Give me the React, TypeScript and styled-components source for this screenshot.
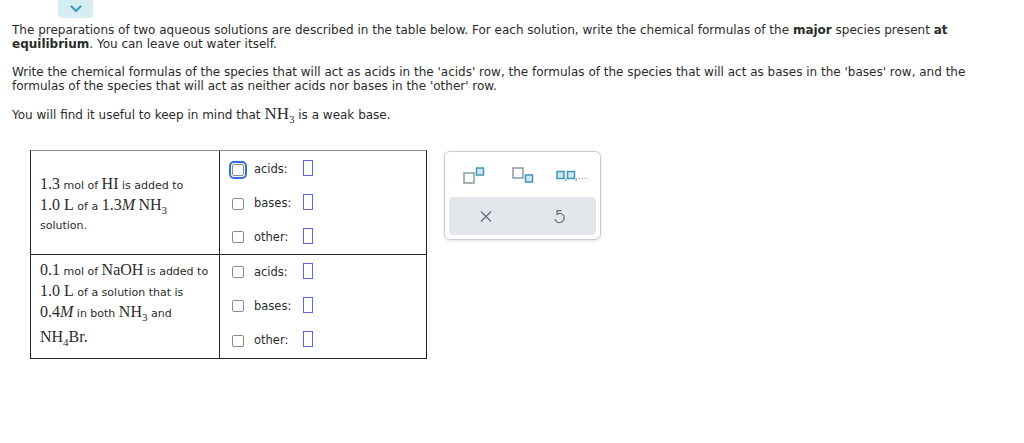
import React from "react";
import styled, { createGlobalStyle } from "styled-components";

const Global = createGlobalStyle`
  html, body { margin: 0; padding: 0; background: #fff; }
  body { font-family: "DejaVu Sans", Verdana, sans-serif; color: #2b2b2b; }
`;

const Page = styled.div`
  padding: 0 12px;
  width: 1010px;
  box-sizing: border-box;
`;

const Tab = styled.div`
  width: 35px;
  height: 18px;
  margin-left: 46px;
  background: #d7edf4;
  border-radius: 0 0 4px 4px;
  display: flex;
  align-items: center;
  justify-content: center;
`;

const Para = styled.p<{ $extra?: number }>`
  margin: 5px 0 13px;
  font-size: 12px;
  line-height: 14px;
  white-space: nowrap;
  & + & { margin-top: ${(p) => 13 + (p.$extra ?? 0)}px; }
`;

const Math = styled.span<{ $italic?: boolean; $size?: number }>`
  font-family: "Liberation Serif", "Times New Roman", serif;
  font-size: ${(p) => p.$size ?? 16}px;
  font-style: ${(p) => (p.$italic ? "italic" : "normal")};
`;

const Sub = styled.sub`
  font-size: 11px;
  vertical-align: -4px;
  line-height: 0;
`;

const Work = styled.div`
  display: flex;
  align-items: flex-start;
  gap: 17px;
  margin: 28px 0 0 18px;
`;

const Grid = styled.div`
  display: grid;
  grid-template-columns: 189px 206px;
  grid-template-rows: 104px 103px;
  border: 1px solid #222;
  border-top-color: #8c8c8c;
`;

const Desc = styled.div<{ $last?: boolean; $pad: number }>`
  border-right: 1px solid #222;
  border-bottom: ${(p) => (p.$last ? "none" : "1px solid #222")};
  padding: ${(p) => p.$pad}px 4px 0 9px;
  display: flex;
  flex-direction: column;
  font-size: 11px;
`;

const DescLine = styled.div<{ $h?: number }>`
  height: ${(p) => p.$h ?? 21}px;
  line-height: ${(p) => p.$h ?? 21}px;
  white-space: nowrap;
`;

const Answers = styled.div<{ $last?: boolean }>`
  border-bottom: ${(p) => (p.$last ? "none" : "1px solid #222")};
  padding-top: ${(p) => (p.$last ? 0 : 2)}px;
  display: flex;
  flex-direction: column;
`;

const AnswerRow = styled.div`
  flex: 1;
  display: flex;
  align-items: center;
  font-size: 11.5px;
`;

const CheckSlot = styled.div`
  width: 34px;
  display: flex;
  justify-content: center;
  padding-left: 1px;
  box-sizing: border-box;
`;

const Check = styled.span<{ $focus?: boolean }>`
  box-sizing: border-box;
  display: inline-block;
  width: 12px;
  height: 12px;
  border: 1px solid #8a8a8a;
  border-radius: 2px;
  background: #fff;
  ${(p) =>
    p.$focus
      ? `outline: 2px solid #2f6fd8; outline-offset: 1px; border-radius: 2px;`
      : ""}
`;

const Label = styled.span`
  width: 49px;
  margin-bottom: 1px;
`;

const Slot = styled.span`
  box-sizing: border-box;
  display: inline-block;
  width: 10px;
  height: 16px;
  border: 1.5px solid #5b66ee;
  margin-bottom: 3px;
`;

const Panel = styled.div`
  margin-top: 1px;
  width: 157px;
  height: 89px;
  box-sizing: border-box;
  border: 1px solid #c9cdd1;
  border-radius: 6px;
  box-shadow: 0 1px 3px rgba(0, 0, 0, 0.12);
  padding: 0 4px 4px;
  display: flex;
  flex-direction: column;
`;

const IconRow = styled.div`
  flex: 1;
  display: grid;
  grid-template-columns: repeat(3, 1fr);
  align-items: center;
  justify-items: center;
  padding-top: 2px;
`;

const Bar = styled.div`
  height: 38px;
  background: #e3e7eb;
  border-radius: 4px;
  display: grid;
  grid-template-columns: 1fr 1fr;
  align-items: center;
  justify-items: center;
`;

const Chevron = () => (
  <svg width="12" height="8" viewBox="0 0 12 8">
    <path d="M1.5 1.5 L6 6 L10.5 1.5" fill="none" stroke="#3d9cc4" strokeWidth="2.2" strokeLinecap="round" strokeLinejoin="round" />
  </svg>
);

const SupIcon = () => (
  <svg width="22" height="18" viewBox="0 0 22 18">
    <rect x="1" y="6" width="10" height="10" fill="#fff" stroke="#8b9a9f" strokeWidth="1.5" />
    <rect x="13.5" y="1" width="7" height="7" fill="#cfe8ef" stroke="#3f98b4" strokeWidth="1.5" />
  </svg>
);

const SubIcon = () => (
  <svg width="22" height="17" viewBox="0 0 22 17">
    <rect x="1" y="1" width="10" height="10" fill="#fff" stroke="#8b9a9f" strokeWidth="1.5" />
    <rect x="13.5" y="8" width="7" height="7" fill="#cfe8ef" stroke="#3f98b4" strokeWidth="1.5" />
  </svg>
);

const ListIcon = () => (
  <svg width="32" height="12" viewBox="0 0 32 12">
    <rect x="1" y="1.5" width="7" height="7" fill="#cfe8ef" stroke="#3f98b4" strokeWidth="1.5" />
    <path d="M10 8.5 L9.5 11" stroke="#3f98b4" strokeWidth="1" />
    <rect x="11.5" y="1.5" width="7" height="7" fill="#cfe8ef" stroke="#3f98b4" strokeWidth="1.5" />
    <path d="M20.5 8.5 L20 11" stroke="#3f98b4" strokeWidth="1" />
    <circle cx="23.5" cy="8.5" r="0.6" fill="#6c7c82" />
    <circle cx="26.5" cy="8.5" r="0.6" fill="#6c7c82" />
    <circle cx="29.5" cy="8.5" r="0.6" fill="#6c7c82" />
  </svg>
);

const XIcon = () => (
  <svg width="12" height="11" viewBox="0 0 12 11">
    <path d="M1 0.5 L11 10.5 M11 0.5 L1 10.5" stroke="#5f6f77" strokeWidth="1.2" />
  </svg>
);

const UndoIcon = () => (
  <svg width="13" height="15" viewBox="0 0 13 15">
    <path d="M4 5.2 A4.6 4.6 0 1 1 2.2 10.4" fill="none" stroke="#5f6f77" strokeWidth="1.2" strokeLinecap="round" />
    <path d="M8 1.6 H4 V5.4" fill="none" stroke="#5f6f77" strokeWidth="1.2" strokeLinecap="round" strokeLinejoin="round" />
  </svg>
);

const labels = ["acids:", "bases:", "other:"];

const AnswerBlock = ({ last, focusFirst }: { last?: boolean; focusFirst?: boolean }) => (
  <Answers $last={last}>
    {labels.map((l, i) => (
      <AnswerRow key={l}>
        <CheckSlot>
          <Check $focus={focusFirst && i === 0} />
        </CheckSlot>
        <Label>{l}</Label>
        <Slot />
      </AnswerRow>
    ))}
  </Answers>
);

export default function App() {
  return (
    <Page>
      <Global />
      <Tab>
        <Chevron />
      </Tab>
      <Para>
        The preparations of two aqueous solutions are described in the table below. For each solution, write the chemical formulas of the <b>major</b> species present <b>at</b>
        <br />
        <b>equilibrium</b>. You can leave out water itself.
      </Para>
      <Para>
        Write the chemical formulas of the species that will act as acids in the 'acids' row, the formulas of the species that will act as bases in the 'bases' row, and the
        <br />
        formulas of the species that will act as neither acids nor bases in the 'other' row.
      </Para>
      <Para $extra={1}>
        You will find it useful to keep in mind that <Math $size={17}>NH<Sub>3</Sub></Math> is a weak base.
      </Para>
      <Work>
        <Grid>
          <Desc $pad={22}>
            <DescLine>
              <Math>1.3</Math> mol of <Math>HI</Math> is added to
            </DescLine>
            <DescLine>
              <Math>1.0 L</Math> of a <Math>1.3</Math>
              <Math $italic>M</Math> <Math>NH<Sub>3</Sub></Math>
            </DescLine>
            <DescLine>solution.</DescLine>
          </Desc>
          <AnswerBlock focusFirst />
          <Desc $last $pad={4}>
            <DescLine>
              <Math>0.1</Math> mol of <Math>NaOH</Math> is added to
            </DescLine>
            <DescLine>
              <Math>1.0 L</Math> of a solution that is
            </DescLine>
            <DescLine>
              <Math>0.4</Math>
              <Math $italic>M</Math> in both <Math>NH<Sub>3</Sub></Math> and
            </DescLine>
            <DescLine $h={29}>
              <Math>NH<Sub>4</Sub>Br.</Math>
            </DescLine>
          </Desc>
          <AnswerBlock last />
        </Grid>
        <Panel>
          <IconRow>
            <SupIcon />
            <SubIcon />
            <ListIcon />
          </IconRow>
          <Bar>
            <XIcon />
            <UndoIcon />
          </Bar>
        </Panel>
      </Work>
    </Page>
  );
}
